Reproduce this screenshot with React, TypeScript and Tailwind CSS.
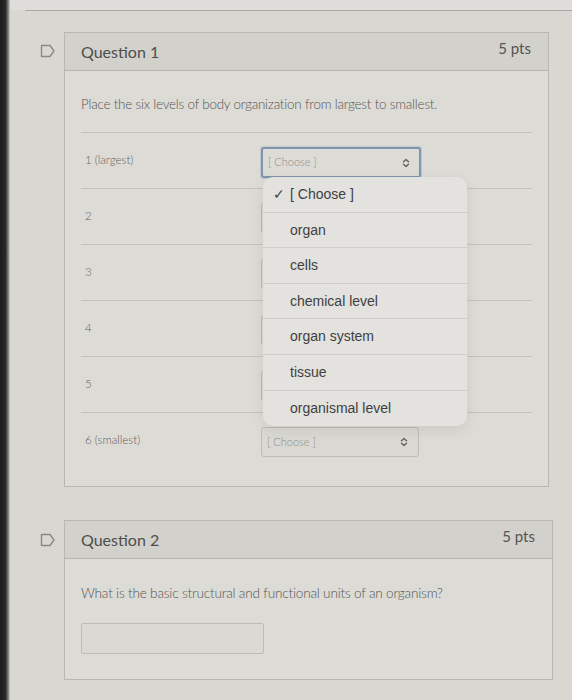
import React from "react";

const levels = ["1 (largest)", "2", "3", "4", "5", "6 (smallest)"];
const options = ["organ", "cells", "chemical level", "organ system", "tissue", "organismal level"];

const Flag = () => (
  <svg width="16" height="14" viewBox="0 0 16 14" fill="none" className="text-[#8a8985]">
    <path d="M1.5 1.5h8.5l4 5.5-4 5.5H1.5z" stroke="currentColor" strokeWidth="1.4" strokeLinejoin="round" />
  </svg>
);

const Chevrons = () => (
  <svg width="8" height="10" viewBox="0 0 8 10" fill="none" className="text-[#666]">
    <path d="M1.5 3.8L4 1.5l2.5 2.3M1.5 6.2L4 8.5l2.5-2.3" stroke="currentColor" strokeWidth="1.5" strokeLinecap="round" strokeLinejoin="round" />
  </svg>
);

const Select = ({ focused }: { focused?: boolean }) => (
  <div
    className={
      focused
        ? "flex h-[31px] w-[160px] items-center justify-between rounded-[3px] border-2 border-[#7f95ad] bg-[#dcdbd6] pl-[5px] pr-[9px] shadow-[0_0_0_1px_rgba(120,140,170,0.25)]"
        : "flex h-[30px] w-[158px] items-center justify-between rounded-[3px] border border-[#bdbcb7] bg-[#d9d8d3] pl-[5px] pr-[10px]"
    }
  >
    <span className="text-[11px] font-light text-[#8f8e8a]">[ Choose ]</span>
    <Chevrons />
  </div>
);

const Dropdown = () => (
  <div className="absolute left-[2px] top-[30px] z-10 w-[204px] overflow-hidden rounded-[10px] bg-[#e3e2de] shadow-[0_4px_14px_rgba(0,0,0,0.08)] font-['Liberation_Sans',Arial,sans-serif]">
    <div className="flex h-[35.6px] items-center border-b border-[#cfcec9] pl-[10px] text-[14px] text-[#3f3f3f]">
      <span className="w-[17px] text-[14px]">✓</span>
      <span>[ Choose ]</span>
    </div>
    {options.map((o, i) => (
      <div
        key={o}
        className={
          i === options.length - 1
            ? "flex h-[35.6px] items-center pl-[27px] text-[14px] text-[#3f3f3f]"
            : "flex h-[35.6px] items-center border-b border-[#cfcec9] pl-[27px] text-[14px] text-[#3f3f3f]"
        }
      >
        {o}
      </div>
    ))}
  </div>
);

const CardHeader = ({ title }: { title: string }) => (
  <div className="flex h-[38px] items-start justify-between border-b border-[#b5b4af] bg-[#d2d1cc] pl-[16px] pr-[17px]">
    <span className="mt-[7px] text-[16px] text-[#4e4e4c]">{title}</span>
    <span className="mt-[4px] text-[15px] text-[#555553]">5 pts</span>
  </div>
);

export default function App() {
  return (
    <div className="flex min-h-[700px] w-[572px] overflow-hidden bg-[#d8d7d2] font-['Lato','Open_Sans',sans-serif]">
      <div className="w-[10px] shrink-0 bg-[linear-gradient(90deg,#1c1c1c_0%,#2a2a2a_55%,#8a8985_85%,#d0cfca_100%)]" />
      <div className="flex-1">
        <div className="h-[10px] bg-[#dedddb]" />
        <div className="ml-[15px] h-[1px] bg-[#a9a8a3]" />

        <div className="mt-[21px] flex items-start">
          <div className="ml-[30px] mt-[12px] w-[24px]">
            <Flag />
          </div>
          <div className="w-[485px] border border-[#b8b7b2] bg-[#dcdbd6]">
            <CardHeader title="Question 1" />
            <div className="px-[16px] pb-[18px]">
              <p className="mt-[23px] text-[13.4px] font-light tracking-[-0.2px] text-[#555553]">
                Place the six levels of body organization from largest to smallest.
              </p>
              <div className="mt-[18px]">
                {levels.map((l, i) => (
                  <div key={l} className="flex h-[56px] items-start border-t border-[#c3c2bd] pt-[14px]">
                    <span className="mt-[4px] w-[180px] pl-[4px] text-[11.5px] font-light text-[#5f5f5c]">{l}</span>
                    <div className="relative">
                      <Select focused={i === 0} />
                      {i === 0 && <Dropdown />}
                    </div>
                  </div>
                ))}
              </div>
            </div>
          </div>
        </div>

        <div className="mt-[33px] flex items-start">
          <div className="ml-[30px] mt-[13px] w-[24px]">
            <Flag />
          </div>
          <div className="w-[489px] border border-[#b8b7b2] bg-[#dcdbd6]">
            <CardHeader title="Question 2" />
            <div className="px-[16px] pb-[25px]">
              <p className="mt-[24px] text-[13.6px] font-light tracking-[-0.2px] text-[#555553]">
                What is the basic structural and functional units of an organism?
              </p>
              <div className="mt-[19px] h-[31px] w-[183px] rounded-[2px] border border-[#bdbcb7] bg-[#dad9d4]" />
            </div>
          </div>
        </div>
      </div>
    </div>
  );
}
